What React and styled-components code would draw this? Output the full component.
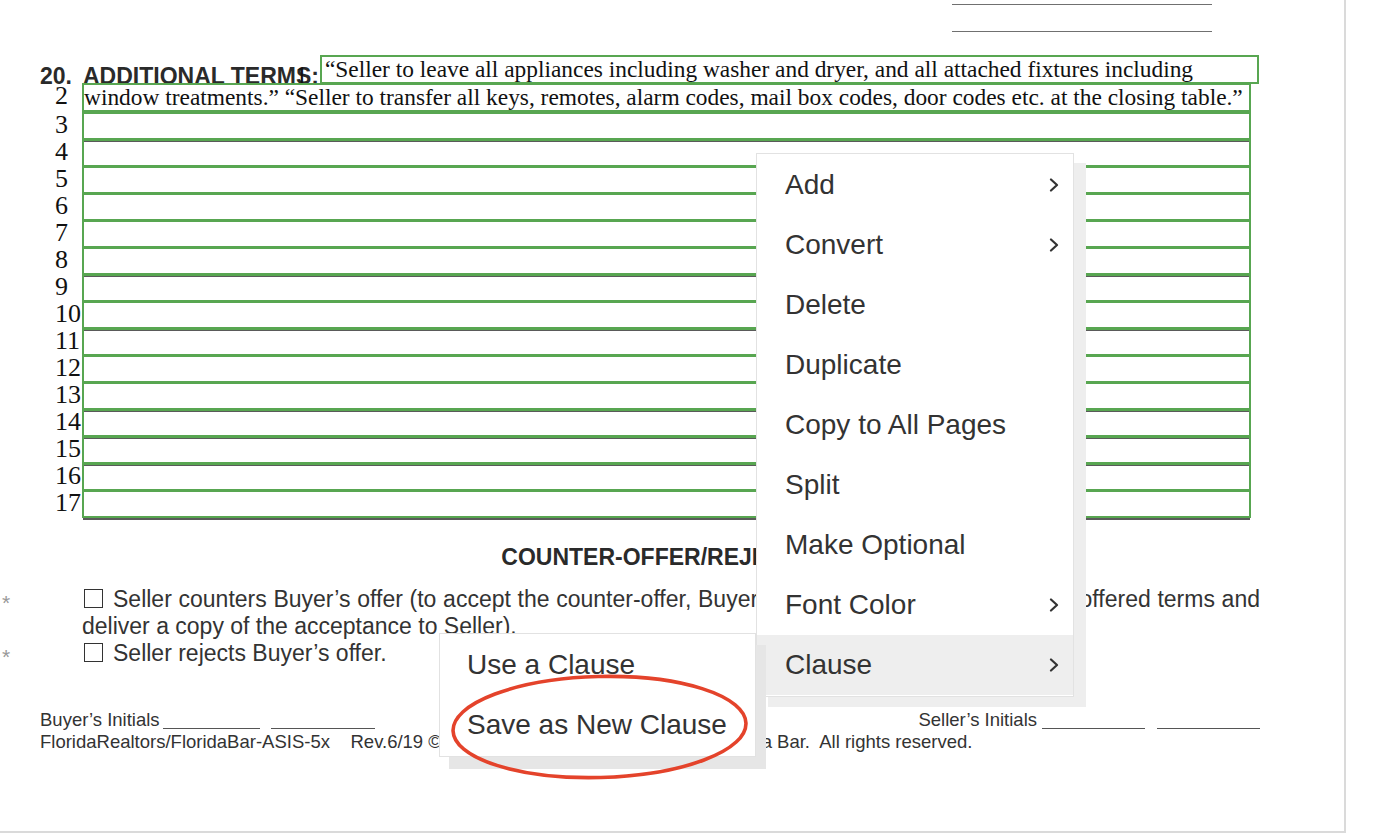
import React from "react";
import styled, { createGlobalStyle, css } from "styled-components";

const GREEN = "#58a651";
const SANS = `"Liberation Sans", Arial, Helvetica, sans-serif`;
const SERIF = `"Liberation Serif", "Times New Roman", serif`;

const GlobalStyle = createGlobalStyle`
  html, body { margin: 0; padding: 0; background: #fff; }
  body { font-family: ${SANS}; }
  * { box-sizing: border-box; }
`;

const Page = styled.div`
  position: relative;
  width: 1346px;
  height: 833px;
  border-right: 2px solid #dadada;
  border-bottom: 2px solid #dadada;
  overflow: hidden;
  background: #fff;
`;

const TopBlanks = styled.div`
  height: 55px;
  padding: 4px 0 0 952px;
`;

const Blank = styled.div`
  width: 260px;
  height: 27px;
  border-top: 1px solid #707070;
`;

const Terms = styled.section`
  padding-left: 40px;
`;

const FirstLine = styled.div`
  display: flex;
  align-items: flex-start;
  height: 28px;
`;

const Heading = styled.h2`
  margin: 0;
  padding-top: 8px;
  display: flex;
  align-items: baseline;
  font: 700 23px/1 ${SANS};
  color: #2a2a2a;
  white-space: nowrap;
`;

const SectionNo = styled.span`
  display: inline-block;
  width: 43px;
`;

const FirstNo = styled.span`
  font: 400 26px/1 ${SERIF};
  color: #111;
  margin-left: -24px;
  margin-right: 12px;
`;

const Row = styled.div`
  display: flex;
  height: ${(p) => p.$h}px;
`;

const LineNo = styled.div`
  width: 42px;
  padding-left: 15px;
  padding-top: 1px;
  font: 400 26px/24px ${SERIF};
  color: #111;
`;

const Field = styled.div`
  flex: 0 0 ${(p) => p.$w}px;
  height: ${(p) => p.$h}px;
  border: 2px solid ${GREEN};
  padding-left: ${(p) => p.$pad ?? 0}px;
  font: 400 23.4px/${(p) => p.$h - 4}px ${SERIF};
  color: #111;
  white-space: nowrap;
  overflow: hidden;
  ${(p) =>
    p.$ruled &&
    css`
      box-shadow: 0 3px 0 -1px #5a5a5a;
    `}
`;

const CounterTitle = styled.h3`
  margin: 27px 0 0;
  padding-right: 4px;
  text-align: center;
  font: 700 23px/27px ${SANS};
  color: #2a2a2a;
`;

const Options = styled.div`
  margin-top: 15px;
  display: grid;
  grid-template-columns: 82px 1178px;
  grid-auto-rows: 27px;
  font: 400 23px/27px ${SANS};
  color: #333;
`;

const Star = styled.div`
  height: 27px;
  padding-left: 2px;
  font-size: 21px;
  line-height: 33px;
  color: #999;
`;

const OptText = styled.div`
  white-space: nowrap;
  ${(p) =>
    p.$justify &&
    css`
      white-space: normal;
      text-align: justify;
      text-align-last: justify;
      word-spacing: -1px;
    `}
`;

const Check = styled.span`
  display: inline-block;
  width: 19px;
  height: 19px;
  border: 1.5px solid #333;
  vertical-align: -1px;
  margin: 0 10px 0 2px;
`;

const Footer = styled.footer`
  margin-top: 41.5px;
  padding-left: 40px;
  width: 1260px;
  font: 400 18.5px/22px ${SANS};
  color: #333;
`;

const InitialsRow = styled.div`
  display: flex;
  justify-content: space-between;
  white-space: nowrap;
`;

const Underline = styled.span`
  display: inline-block;
  width: ${(p) => p.$w}px;
  height: 0;
  margin-left: ${(p) => p.$ml}px;
  border-bottom: 1px solid #555;
  vertical-align: -3px;
`;

const Copyright = styled.div`
  white-space: pre;
`;

const Menu = styled.div`
  position: absolute;
  left: ${(p) => p.$x}px;
  top: ${(p) => p.$y}px;
  width: ${(p) => p.$w}px;
  background: #fff;
  border: 1px solid #e2e2e2;
  padding: 1px 0;
  box-shadow: ${(p) => p.$shadow};
  z-index: ${(p) => p.$z};
  font: 400 28px/1.15 ${SANS};
  color: #333;
`;

const Item = styled.div`
  height: 60px;
  display: flex;
  align-items: center;
  justify-content: space-between;
  padding: 0 14px 0 ${(p) => p.$indent}px;
  background: ${(p) => (p.$active ? "#eeeeee" : "transparent")};
  white-space: nowrap;
`;

const Ring = styled.svg`
  position: absolute;
  left: 450px;
  top: 673px;
  z-index: 5;
  overflow: visible;
  pointer-events: none;
`;

const Chevron = () => (
  <svg width="10" height="14" viewBox="0 0 10 14" aria-hidden="true">
    <path
      d="M2 1.5 L8 7 L2 12.5"
      fill="none"
      stroke="#333"
      strokeWidth="2.2"
      strokeLinecap="round"
      strokeLinejoin="round"
    />
  </svg>
);

const ruledRows = new Set([3, 8, 10, 13, 14, 15, 17]);
const emptyRows = Array.from({ length: 15 }, (_, i) => i + 3);

const mainItems = [
  { label: "Add", sub: true },
  { label: "Convert", sub: true },
  { label: "Delete" },
  { label: "Duplicate" },
  { label: "Copy to All Pages" },
  { label: "Split" },
  { label: "Make Optional" },
  { label: "Font Color", sub: true },
  { label: "Clause", sub: true, active: true },
];

export default function App() {
  return (
    <>
      <GlobalStyle />
      <Page>
        <TopBlanks>
          <Blank />
          <Blank />
        </TopBlanks>

        <Terms>
          <FirstLine>
            <Heading>
              <SectionNo>20.</SectionNo>
              ADDITIONAL TERMS:
              <FirstNo>1</FirstNo>
            </Heading>
            <Field $w={939} $h={29} $pad={3}>
              “Seller to leave all appliances including washer and dryer, and all attached fixtures including
            </Field>
          </FirstLine>
          <Row $h={29}>
            <LineNo>2</LineNo>
            <Field $w={1169} $h={29} $pad={0}>
              window treatments.” “Seller to transfer all keys, remotes, alarm codes, mail box codes, door codes etc. at the closing table.”
            </Field>
          </Row>
          {emptyRows.map((n) => (
            <Row key={n} $h={27}>
              <LineNo>{n}</LineNo>
              <Field $w={1169} $h={28} $ruled={ruledRows.has(n)} />
            </Row>
          ))}
        </Terms>

        <CounterTitle>COUNTER-OFFER/REJECTION</CounterTitle>
        <Options>
          <Star>*</Star>
          <OptText $justify>
            <Check />
            Seller counters Buyer’s offer (to accept the counter-offer, Buyer must sign or initial the counter-offered terms and
          </OptText>
          <Star />
          <OptText>deliver a copy of the acceptance to Seller).</OptText>
          <Star>*</Star>
          <OptText>
            <Check />
            Seller rejects Buyer’s offer.
          </OptText>
        </Options>

        <Footer>
          <InitialsRow>
            <span>
              Buyer’s Initials
              <Underline $w={97} $ml={3} />
              <Underline $w={104} $ml={11} />
            </span>
            <span>
              Seller’s Initials
              <Underline $w={103} $ml={5} />
              <Underline $w={103} $ml={12} />
            </span>
          </InitialsRow>
          <Copyright>
            {"FloridaRealtors/FloridaBar-ASIS-5x    Rev.6/19 © 2017 Florida Realtors® and The Florida Bar.  All rights reserved."}
          </Copyright>
        </Footer>

        <Menu $x={756} $y={153} $w={318} $z={2} $shadow="12px 10px 0 0 #eeeeee">
          {mainItems.map((it) => (
            <Item key={it.label} $indent={28} $active={it.active}>
              <span>{it.label}</span>
              {it.sub && <Chevron />}
            </Item>
          ))}
        </Menu>

        <Menu $x={439} $y={633} $w={317} $z={3} $shadow="10px 12px 0 0 #e6e6e6">
          <Item $indent={27}>
            <span>Use a Clause</span>
          </Item>
          <Item $indent={27}>
            <span>Save as New Clause</span>
          </Item>
        </Menu>

        <Ring width="300" height="110" viewBox="0 0 300 110" aria-hidden="true">
          <ellipse
            cx="149.5"
            cy="54"
            rx="146.5"
            ry="50.5"
            fill="none"
            stroke="#e4432b"
            strokeWidth="3.6"
            transform="rotate(-1.5 149.5 54)"
          />
        </Ring>
      </Page>
    </>
  );
}
